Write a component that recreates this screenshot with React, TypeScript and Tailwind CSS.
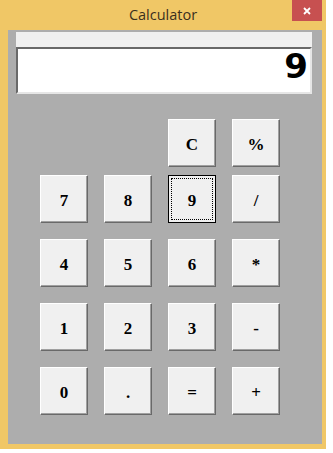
import * as React from "react";

const rows: (string | null)[][] = [
  [null, null, "C", "%"],
  ["7", "8", "9", "/"],
  ["4", "5", "6", "*"],
  ["1", "2", "3", "-"],
  ["0", ".", "=", "+"],
];

function Key({ label, focused }: { label: string; focused?: boolean }) {
  if (focused) {
    return (
      <button className="flex h-[48px] w-[48px] items-center justify-center border border-black bg-[#f0f0f0] p-[2px]">
        <span className="flex h-full w-full items-center justify-center border border-dotted border-black pt-[2px] font-['Liberation_Serif',serif] text-[17px] font-bold leading-none text-black">
          {label}
        </span>
      </button>
    );
  }
  return (
    <button className="flex h-[48px] w-[48px] items-center justify-center border border-t-white border-l-white border-r-[#696969] border-b-[#696969] bg-[#f0f0f0] pt-[2px] font-['Liberation_Serif',serif] text-[17px] font-bold leading-none text-black shadow-[inset_-1px_-1px_0_#a0a0a0]">
      {label}
    </button>
  );
}

export default function App() {
  return (
    <div className="h-[453px] w-[333px] bg-white">
      <div className="flex h-[449px] w-[326px] flex-col bg-[#f0c766]">
        {/* title bar */}
        <div className="relative flex h-[30px] items-center justify-center pb-[1px] font-['Open_Sans','Noto_Sans',sans-serif] text-[14.5px] text-[#3a2f1e]">
          Calculator
          <div className="absolute left-[292px] top-0 flex h-[21px] w-[30px] items-center justify-center bg-[#c75050]">
            <svg width="8" height="8" viewBox="0 0 8 8">
              <path d="M1 1L7 7M7 1L1 7" stroke="white" strokeWidth="1.8" />
            </svg>
          </div>
        </div>

        {/* client area */}
        <div className="ml-[8px] mr-[4px] flex h-[414px] flex-col bg-[#adadad] pl-[8px] pr-[10px] pt-[2px]">
          <div className="h-[15px] bg-[#f0f0f0]" />
          <div className="flex h-[47px] justify-end border-2 border-t-[#696969] border-l-[#696969] border-r-[#e6e6e6] border-b-[#e6e6e6] bg-white pr-[2px]">
            <span className="font-['DejaVu_Sans',sans-serif] text-[34px] font-bold leading-none text-black">
              9
            </span>
          </div>

          <div className="ml-[24px] mt-[25px] flex flex-col">
            {rows.map((row, r) => (
              <div
                key={r}
                className={r === 0 ? "flex gap-[16px]" : r === 1 ? "mt-[8px] flex gap-[16px]" : "mt-[16px] flex gap-[16px]"}
              >
                {row.map((k, c) =>
                  k === null ? (
                    <div key={c} className="h-[48px] w-[48px]" />
                  ) : (
                    <Key key={c} label={k} focused={k === "9"} />
                  )
                )}
              </div>
            ))}
          </div>
        </div>
      </div>
    </div>
  );
}
